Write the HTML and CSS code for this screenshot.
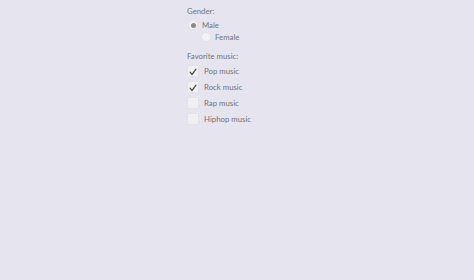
FILE: index.html
```html
<!DOCTYPE html>
<html>
<head>
<meta charset="utf-8">
<link rel="stylesheet" href="styles.css">
</head>
<body>
<div class="form">
  <div class="label">Gender:</div>
  <div class="row">
    <span class="radio checked"><span class="dot"></span></span>
    <span class="text">Male</span>
  </div>
  <div class="row nested">
    <span class="radio"></span>
    <span class="text">Female</span>
  </div>
  <div class="label music">Favorite music:</div>
  <div class="row check-row">
    <span class="box"><svg viewBox="0 0 12 12" width="12" height="12"><path d="M2.5 6.2 L4.8 9 L9.6 2.6" fill="none" stroke="#555" stroke-width="1.6" stroke-linecap="round" stroke-linejoin="round"/></svg></span>
    <span class="text">Pop music</span>
  </div>
  <div class="row check-row">
    <span class="box"><svg viewBox="0 0 12 12" width="12" height="12"><path d="M2.5 6.2 L4.8 9 L9.6 2.6" fill="none" stroke="#555" stroke-width="1.6" stroke-linecap="round" stroke-linejoin="round"/></svg></span>
    <span class="text">Rock music</span>
  </div>
  <div class="row check-row">
    <span class="box"></span>
    <span class="text">Rap music</span>
  </div>
  <div class="row check-row">
    <span class="box"></span>
    <span class="text">Hiphop music</span>
  </div>
</div>
</body>
</html>
```
FILE: styles.css
```css
html, body {
  margin: 0;
  padding: 0;
  background: #e6e4ee;
  height: 100%;
}
body {
  font-family: Lato, "Open Sans", sans-serif;
  font-size: 7.8px;
  color: #737378;
}
.form {
  width: 100px;
  margin: 0 auto;
  padding-top: 6px;
  display: flex;
  flex-direction: column;
}
.label {
  height: 10px;
  line-height: 10px;
}
.row {
  display: flex;
  align-items: center;
  gap: 4px;
  height: 12px;
}
.label + .row {
  margin-top: 3px;
}
.nested {
  padding-left: 13px;
}
.radio {
  width: 10px;
  height: 10px;
  box-sizing: border-box;
  border-radius: 50%;
  background: #f4f4f6;
  border: 1px solid #e4e4e8;
  margin-left: 1px;
  display: flex;
  align-items: center;
  justify-content: center;
}
.dot {
  width: 5px;
  height: 5px;
  border-radius: 50%;
  background: #888;
}
.music {
  margin-top: 8px;
}
.label.music + .row {
  margin-top: 4px;
}
.check-row {
  height: 12px;
  margin-bottom: 4px;
  gap: 5px;
}
.box {
  width: 12px;
  height: 12px;
  box-sizing: border-box;
  background: #f0f0f2;
  border: 1px solid #e2e2e6;
  border-radius: 1px;
  display: flex;
}
.box svg {
  display: block;
}
```
